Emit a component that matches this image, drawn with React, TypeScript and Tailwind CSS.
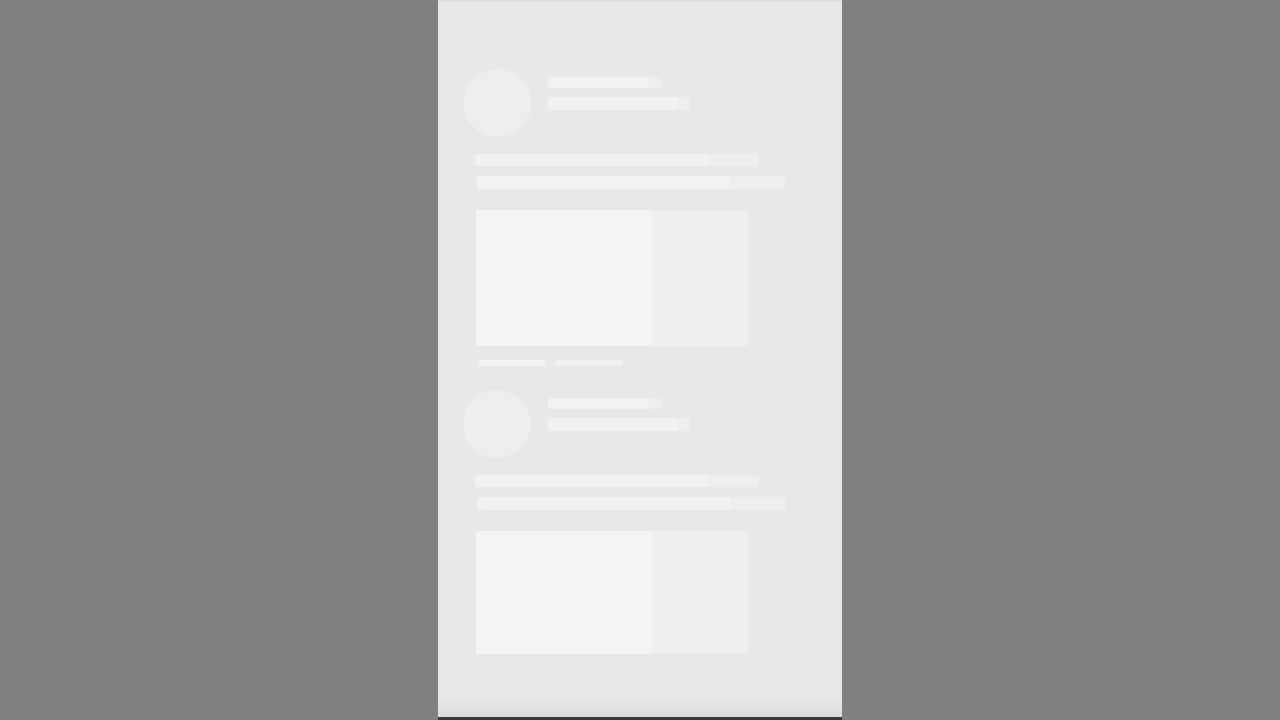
import React from 'react';

type PostProps = { imageHeight: string; showMeta: boolean };

// Bar with a brighter leading part, like a shimmer caught mid-sweep
const Bar = ({ w, h, split, ml = '' }: { w: string; h: string; split: string; ml?: string }) => (
	<div className={`flex ${w} ${h} ${ml} rounded-sm overflow-hidden bg-[#eeeeee]`}>
		<div className={`${split} h-full bg-[#f2f2f2]`} />
	</div>
);

const SkeletonPost = ({ imageHeight, showMeta }: PostProps) => (
	<div className="flex flex-col">
		<div className="flex items-start pl-[25px]">
			<div className="w-[68px] h-[68px] rounded-full bg-[#eeeeee] shrink-0" />
			<div className="flex flex-col ml-[17px] pt-[8px] gap-[9px]">
				<Bar w="w-[114px]" h="h-[11px]" split="w-[100px]" />
				<Bar w="w-[142px]" h="h-[13px]" split="w-[130px]" />
			</div>
		</div>
		<div className="flex flex-col mt-[17px] gap-[10px]">
			<Bar w="w-[284px]" h="h-[12px]" split="w-[233px]" ml="ml-[37px]" />
			<Bar w="w-[309px]" h="h-[13px]" split="w-[253px]" ml="ml-[39px]" />
		</div>
		<div className={`flex ml-[38px] mt-[21px] w-[272px] ${imageHeight} bg-[#efefef]`}>
			<div className="w-[176px] h-full bg-[#f4f4f4]" />
		</div>
		{showMeta && (
			<div className="flex ml-[40px] mt-[14px] gap-[9px]">
				<div className="w-[68px] h-[6px] rounded-sm bg-[#f3f3f3]" />
				<div className="w-[68px] h-[6px] rounded-sm bg-[#f1f1f1]" />
			</div>
		)}
	</div>
);

export default function App() {
	return (
		<div className="flex justify-center w-full h-screen bg-[#808080] overflow-hidden">
			<div className="flex flex-col w-[404px] h-full bg-[#e8e8e8] border-t-2 border-[#dedede]">
				<div className="flex flex-col flex-1 pt-[67px] gap-[24px]">
					<SkeletonPost imageHeight="h-[136px]" showMeta />
					<SkeletonPost imageHeight="h-[123px]" showMeta={false} />
				</div>
				<div className="h-[22px] bg-gradient-to-b from-[#e8e8e8] to-[#dcdcdc]" />
				<div className="h-[3px] bg-[#3a3a3a]" />
			</div>
		</div>
	);
}
